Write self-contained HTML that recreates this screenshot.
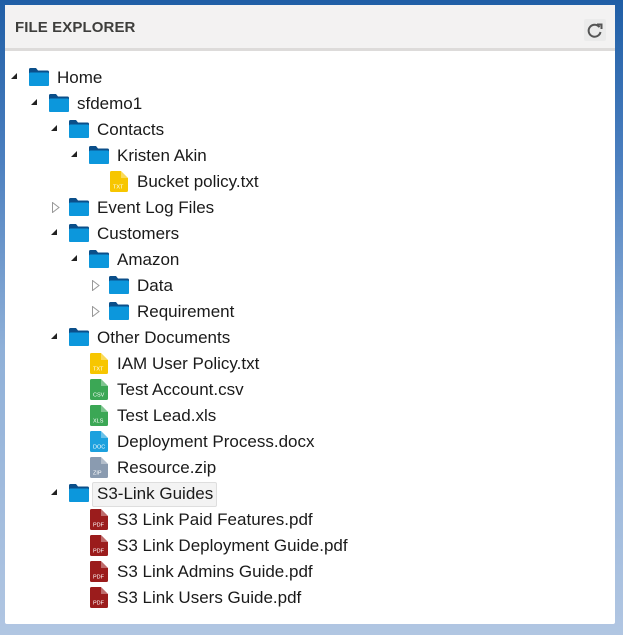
<!DOCTYPE html>
<html><head><meta charset="utf-8"><style>
html,body{margin:0;padding:0}
body{width:623px;height:635px;overflow:hidden;background:linear-gradient(180deg,#1f5ea6 0%,#4b7fbf 25%,#8fb0d8 55%,#b1c6e2 100%);position:relative;font-family:"Liberation Sans",sans-serif}
.panel{position:absolute;left:5px;top:5px;width:610px;height:619px;background:#fff;border-radius:2px}
.hdr{position:absolute;left:0;top:0;width:610px;height:43px;background:#f3f2f2;border-bottom:3px solid #dddbda}
.hdr .t{position:absolute;left:10px;top:14px;font-size:15px;font-weight:bold;color:#3e3e3c;letter-spacing:0.1px}
.ref{position:absolute;left:579px;top:14px;width:22px;height:22px;background:#ebebeb;border-radius:2px}
.row{position:absolute;height:26px;font-size:17px;color:#1a1a1a;line-height:26px;white-space:nowrap}
.tri{position:absolute}
.ico{position:absolute}
.hl{position:absolute;left:92px;top:482px;width:123px;height:23px;background:#f3f3f3;border:1px solid #dedede;border-radius:2px}
</style></head><body>
<div class="panel">
<div class="hdr"><div class="t">FILE EXPLORER</div>
<div class="ref"><svg width="22" height="22" viewBox="0 0 22 22"><path d="M15.5 8.2A6 6 0 1 0 16.5 13" fill="none" stroke="#555" stroke-width="2"/><path d="M13 5.5h4.5V10" fill="none" stroke="#555" stroke-width="2"/></svg></div></div>
</div>
<div class="hl"></div>
<div id="tree"></div>
<script>
var rows=[[0,'f','e','Home'],[1,'f','e','sfdemo1'],[2,'f','e','Contacts'],[3,'f','e','Kristen Akin'],[4,'txt','','Bucket policy.txt'],[2,'f','c','Event Log Files'],[2,'f','e','Customers'],[3,'f','e','Amazon'],[4,'f','c','Data'],[4,'f','c','Requirement'],[2,'f','e','Other Documents'],[3,'txt','','IAM User Policy.txt'],[3,'csv','','Test Account.csv'],[3,'xls','','Test Lead.xls'],[3,'doc','','Deployment Process.docx'],[3,'zip','','Resource.zip'],[2,'f','e','S3-Link Guides'],[3,'pdf','','S3 Link Paid Features.pdf'],[3,'pdf','','S3 Link Deployment Guide.pdf'],[3,'pdf','','S3 Link Admins Guide.pdf'],[3,'pdf','','S3 Link Users Guide.pdf']];
var col={txt:'#f7c600',csv:'#3ba755',xls:'#3ba755',doc:'#1ca1de',zip:'#8a9bb0',pdf:'#9b1c1c'};
var lab={txt:'TXT',csv:'CSV',xls:'XLS',doc:'DOC',zip:'ZIP',pdf:'PDF'};
var h='';
rows.forEach(function(r,i){var L=r[0],cy=77+26*i;
if(r[2]=='e')h+='<svg class="tri" style="left:'+(11+20*L)+'px;top:'+(cy-4)+'px" width="8" height="8"><path d="M6 0V6H0Z" fill="#222"/></svg>';
if(r[2]=='c')h+='<svg class="tri" style="left:'+(12+20*L)+'px;top:'+(cy-5)+'px" width="8" height="11"><path d="M0.5 0.5L7 5.5L0.5 10.5Z" fill="#fff" stroke="#999"/></svg>';
if(r[1]=='f')h+='<svg class="ico" style="left:'+(29+20*L)+'px;top:'+(cy-9)+'px" width="20" height="18"><path d="M0 1.5Q0 0 1.5 0H7L9 2.5H18.5Q20 2.5 20 4V16.5Q20 18 18.5 18H1.5Q0 18 0 16.5Z" fill="#0b4f8a"/><path d="M1.5 4.5H18.5Q20 4.5 20 6V16.5Q20 18 18.5 18H1.5Q0 18 0 16.5V6Q0 4.5 1.5 4.5Z" fill="#0c97dc"/></svg>';
else h+='<svg class="ico" style="left:'+(30+20*L)+'px;top:'+(cy-10)+'px" width="18" height="21"><path d="M1.5 0H11L18 7V19.5Q18 21 16.5 21H1.5Q0 21 0 19.5V1.5Q0 0 1.5 0Z" fill="'+col[r[1]]+'"/><path d="M11 0V7H18Z" fill="#fff" opacity="0.35"/><text x="3" y="17.5" font-size="5.5" fill="#fff" font-family=\'Liberation Sans\'>'+lab[r[1]]+'</text></svg>';
h+='<div class="row" style="left:'+(57+20*L)+'px;top:'+(cy-12)+'px">'+r[3]+'</div>';});
document.getElementById('tree').innerHTML=h;
</script>
</body></html>
